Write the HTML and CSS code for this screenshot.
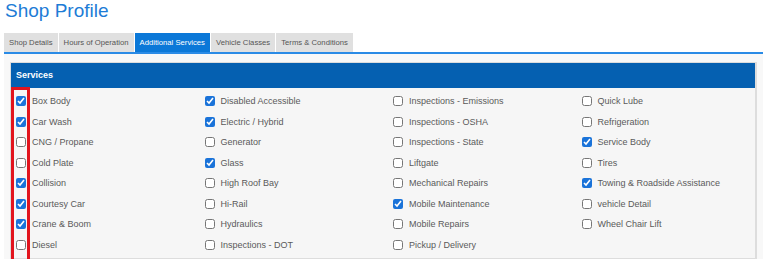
FILE: index.html
```html
<!DOCTYPE html>
<html lang="en">
<head>
<meta charset="utf-8">
<title>Shop Profile</title>
<link rel="stylesheet" href="styles.css">
</head>
<body>
<div class="page">
  <h1 class="title">Shop Profile</h1>
  <ul class="tabs">
    <li class="tab">Shop Details</li>
    <li class="tab">Hours of Operation</li>
    <li class="tab active">Additional Services</li>
    <li class="tab">Vehicle Classes</li>
    <li class="tab">Terms &amp; Conditions</li>
  </ul>
  <div class="tab-content">
    <div class="panel">
      <div class="panel-heading">Services</div>
      <div class="panel-body">
        <div class="col">
          <label class="item"><input type="checkbox" checked><span>Box Body</span></label>
          <label class="item"><input type="checkbox" checked><span>Car Wash</span></label>
          <label class="item"><input type="checkbox"><span>CNG / Propane</span></label>
          <label class="item"><input type="checkbox"><span>Cold Plate</span></label>
          <label class="item"><input type="checkbox" checked><span>Collision</span></label>
          <label class="item"><input type="checkbox" checked><span>Courtesy Car</span></label>
          <label class="item"><input type="checkbox" checked><span>Crane &amp; Boom</span></label>
          <label class="item"><input type="checkbox"><span>Diesel</span></label>
        </div>
        <div class="col">
          <label class="item"><input type="checkbox" checked><span>Disabled Accessible</span></label>
          <label class="item"><input type="checkbox" checked><span>Electric / Hybrid</span></label>
          <label class="item"><input type="checkbox"><span>Generator</span></label>
          <label class="item"><input type="checkbox" checked><span>Glass</span></label>
          <label class="item"><input type="checkbox"><span>High Roof Bay</span></label>
          <label class="item"><input type="checkbox"><span>Hi-Rail</span></label>
          <label class="item"><input type="checkbox"><span>Hydraulics</span></label>
          <label class="item"><input type="checkbox"><span>Inspections - DOT</span></label>
        </div>
        <div class="col">
          <label class="item"><input type="checkbox"><span>Inspections - Emissions</span></label>
          <label class="item"><input type="checkbox"><span>Inspections - OSHA</span></label>
          <label class="item"><input type="checkbox"><span>Inspections - State</span></label>
          <label class="item"><input type="checkbox"><span>Liftgate</span></label>
          <label class="item"><input type="checkbox"><span>Mechanical Repairs</span></label>
          <label class="item"><input type="checkbox" checked><span>Mobile Maintenance</span></label>
          <label class="item"><input type="checkbox"><span>Mobile Repairs</span></label>
          <label class="item"><input type="checkbox"><span>Pickup / Delivery</span></label>
        </div>
        <div class="col">
          <label class="item"><input type="checkbox"><span>Quick Lube</span></label>
          <label class="item"><input type="checkbox"><span>Refrigeration</span></label>
          <label class="item"><input type="checkbox" checked><span>Service Body</span></label>
          <label class="item"><input type="checkbox"><span>Tires</span></label>
          <label class="item"><input type="checkbox" checked><span>Towing &amp; Roadside Assistance</span></label>
          <label class="item"><input type="checkbox"><span>vehicle Detail</span></label>
          <label class="item"><input type="checkbox"><span>Wheel Chair Lift</span></label>
        </div>
      </div>
    </div>
  </div>
  <div class="highlight"></div>
</div>
</body>
</html>
```
FILE: styles.css
```css
html, body {
  margin: 0;
  padding: 0;
  background: #ffffff;
  font-family: "Liberation Sans", Arial, sans-serif;
  overflow: hidden;
}

.page {
  position: relative;
  padding: 0 5px 0 4px;
  height: 259px;
  overflow: hidden;
}

.title {
  margin: 0 0 11px 1px;
  font-size: 19px;
  font-weight: normal;
  line-height: 22px;
  color: #1d7cd6;
}

.tabs {
  list-style: none;
  margin: 0;
  padding: 0;
  display: flex;
  gap: 1px;
  border-bottom: 2px solid #2a8be6;
}

.tab {
  height: 19px;
  line-height: 19px;
  padding: 0 5px;
  font-size: 7.7px;
  color: #555555;
  background: #e0e0e0;
}

.tab.active {
  background: #0b78d8;
  color: #ffffff;
}

.tab-content {
  background: #f8f8f8;
  padding: 8px 6px 0 6px;
}

.panel {
  border: 1px solid #dddddd;
  border-right-width: 2px;
  background: #f6f6f6;
}

.panel-heading {
  height: 25px;
  line-height: 24px;
  padding-left: 5px;
  background: #0560b1;
  color: #ffffff;
  font-size: 9px;
  font-weight: bold;
}

.panel-body {
  display: grid;
  grid-template-columns: 188.5px 188.5px 188.5px 1fr;
  padding: 3px 0 3px 5px;
}

.col {
  display: flex;
  flex-direction: column;
}

.item {
  display: flex;
  align-items: center;
  height: 20.5px;
  font-size: 9px;
  color: #5a5a5a;
}

.item input {
  width: 10px;
  height: 10px;
  margin: 0 6px 0 0;
  accent-color: #1a73d9;
}

.highlight {
  position: absolute;
  left: 11px;
  top: 87px;
  width: 13px;
  height: 172px;
  border: 3px solid #e2141d;
  border-bottom: none;
}
```
